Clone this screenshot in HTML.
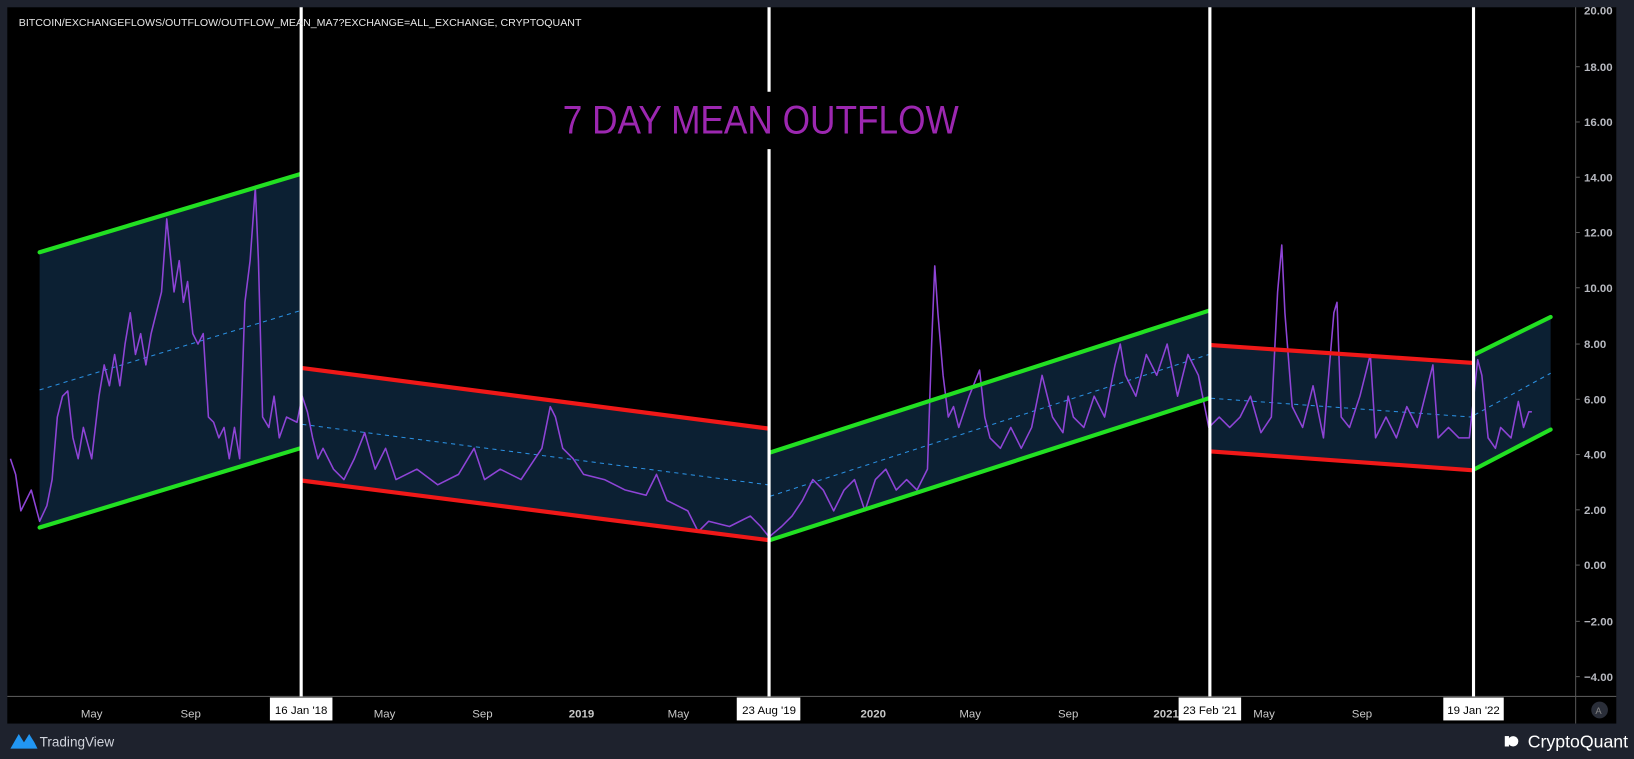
<!DOCTYPE html>
<html><head><meta charset="utf-8"><style>
html,body{margin:0;padding:0;background:#1e222d;overflow:hidden}
svg{display:block}
</style></head><body>
<svg width="1634" height="759" viewBox="0 0 1568 728" preserveAspectRatio="none" xmlns="http://www.w3.org/2000/svg" font-family="Liberation Sans, sans-serif">
<rect width="1568" height="728" fill="#1e222d"/>
<rect x="7" y="7" width="1544" height="687" fill="#000"/>
<line x1="1512" y1="7" x2="1512" y2="694" stroke="#555" stroke-width="1"/>
<line x1="7" y1="668" x2="1551" y2="668" stroke="#555" stroke-width="1"/>
<g fill="#b7b9c0" font-size="11" font-weight="bold">
<text x="1520" y="14">20.00</text>
<text x="1520" y="68">18.00</text>
<text x="1520" y="121">16.00</text>
<text x="1520" y="174">14.00</text>
<text x="1520" y="227">12.00</text>
<text x="1520" y="280">10.00</text>
<text x="1520" y="334">8.00</text>
<text x="1520" y="387">6.00</text>
<text x="1520" y="440">4.00</text>
<text x="1520" y="493">2.00</text>
<text x="1520" y="546">0.00</text>
<text x="1520" y="600">−2.00</text>
<text x="1520" y="653">−4.00</text>
</g>
<g stroke="#555"><line x1="1512" x2="1516" y1="64" y2="64"/><line x1="1512" x2="1516" y1="117" y2="117"/><line x1="1512" x2="1516" y1="170" y2="170"/><line x1="1512" x2="1516" y1="223" y2="223"/><line x1="1512" x2="1516" y1="276" y2="276"/><line x1="1512" x2="1516" y1="330" y2="330"/><line x1="1512" x2="1516" y1="383" y2="383"/><line x1="1512" x2="1516" y1="436" y2="436"/><line x1="1512" x2="1516" y1="489" y2="489"/><line x1="1512" x2="1516" y1="542" y2="542"/><line x1="1512" x2="1516" y1="596" y2="596"/><line x1="1512" x2="1516" y1="649" y2="649"/></g>
<circle cx="1535" cy="681" r="8" fill="#2a2e39"/><text x="1531" y="685" font-size="9" fill="#888">A</text>
<g fill="#c8c8c8" font-size="11" text-anchor="middle">
<text x="88" y="688">May</text><text x="183" y="688">Sep</text><text x="369" y="688">May</text><text x="463" y="688">Sep</text><text x="558" y="688" font-weight="bold">2019</text><text x="651" y="688">May</text><text x="838" y="688" font-weight="bold">2020</text><text x="931" y="688">May</text><text x="1025" y="688">Sep</text><text x="1119" y="688" font-weight="bold">2021</text><text x="1213" y="688">May</text><text x="1307" y="688">Sep</text>
</g>
<g fill="#0c2033">
<polygon points="38,242 288,167 288,430 38,506"/>
<polygon points="290,353 737,411 737,518 290,461"/>
<polygon points="739,434 1160,298 1160,382 739,518"/>
<polygon points="1162,331 1412,348 1412,451 1162,433"/>
<polygon points="1415,340 1488,304 1488,412 1415,450"/>
</g>
<g stroke="#2a8fe0" stroke-width="1" stroke-dasharray="4,4">
<line x1="38" y1="374" x2="288" y2="298"/>
<line x1="290" y1="407" x2="737" y2="465"/>
<line x1="739" y1="476" x2="1160" y2="340"/>
<line x1="1162" y1="382" x2="1412" y2="400"/>
<line x1="1415" y1="398" x2="1488" y2="358"/>
</g>
<polyline fill="none" stroke="#8e44d6" stroke-width="1.5" stroke-linejoin="round" points="10,440 15,455 20,490 30,470 38,500 45,485 50,460 55,400 60,380 65,375 70,420 75,440 80,410 88,440 95,380 100,350 105,370 110,340 115,370 120,330 125,300 130,340 135,320 140,350 145,320 150,300 155,280 160,210 163,240 167,280 172,250 176,290 180,270 185,320 190,330 195,320 200,400 205,405 210,420 215,410 220,440 225,410 230,440 235,290 240,250 245,180 248,250 252,400 258,410 263,380 268,420 275,400 285,405 290,380 295,395 300,420 305,440 310,430 320,450 330,460 340,440 350,415 360,450 370,430 380,460 400,450 420,465 440,455 455,430 465,460 480,450 500,460 520,430 528,390 533,400 540,430 550,440 560,455 580,460 600,470 620,475 630,455 640,480 660,490 670,510 680,500 700,505 720,495 730,505 738,515 750,505 760,495 770,480 780,460 790,470 800,490 810,470 820,460 830,490 840,460 850,450 860,470 870,460 880,470 890,450 894,330 897,255 900,300 905,360 910,400 915,390 920,410 930,380 940,355 945,400 950,420 960,430 970,410 980,430 990,410 1000,360 1010,400 1020,415 1025,380 1030,400 1040,410 1050,380 1060,400 1070,350 1075,330 1080,360 1090,380 1100,340 1110,360 1120,330 1130,380 1140,340 1150,360 1155,385 1160,410 1170,400 1180,410 1190,400 1200,380 1210,415 1220,400 1226,280 1230,235 1233,300 1240,390 1250,410 1260,370 1270,420 1280,300 1283,290 1287,400 1295,410 1305,380 1315,340 1320,420 1330,400 1340,420 1350,390 1360,410 1375,350 1380,420 1390,410 1400,420 1410,420 1418,345 1422,360 1428,420 1435,430 1440,410 1450,420 1457,385 1462,410 1467,395 1470,395"/>
<g stroke-width="4" stroke-linecap="round">
<line x1="38" y1="242" x2="288" y2="167" stroke="#22e022"/>
<line x1="38" y1="506" x2="288" y2="430" stroke="#22e022"/>
<line x1="290" y1="353" x2="737" y2="411" stroke="#f01818"/>
<line x1="290" y1="461" x2="737" y2="518" stroke="#f01818"/>
<line x1="739" y1="434" x2="1160" y2="298" stroke="#22e022"/>
<line x1="739" y1="518" x2="1160" y2="382" stroke="#22e022"/>
<line x1="1162" y1="331" x2="1412" y2="348" stroke="#f01818"/>
<line x1="1162" y1="433" x2="1412" y2="451" stroke="#f01818"/>
<line x1="1415" y1="340" x2="1488" y2="304" stroke="#22e022"/>
<line x1="1415" y1="450" x2="1488" y2="412" stroke="#22e022"/>
</g>
<g stroke="#fff" stroke-width="3">
<line x1="289" y1="7" x2="289" y2="668"/>
<line x1="738" y1="7" x2="738" y2="88"/>
<line x1="738" y1="143" x2="738" y2="668"/>
<line x1="1161" y1="7" x2="1161" y2="668"/>
<line x1="1414" y1="7" x2="1414" y2="668"/>
</g>
<text x="540" y="128" font-size="38" fill="#9c27b0" textLength="380" lengthAdjust="spacingAndGlyphs">7 DAY MEAN OUTFLOW</text>
<text x="18" y="25" font-size="10" fill="#e8e8e8" textLength="540" lengthAdjust="spacingAndGlyphs">BITCOIN/EXCHANGEFLOWS/OUTFLOW/OUTFLOW_MEAN_MA7?EXCHANGE=ALL_EXCHANGE, CRYPTOQUANT</text>
<g font-size="11" text-anchor="middle" fill="#000">
<rect x="259" y="669" width="60" height="22" fill="#fff"/><text x="289" y="685">16 Jan '18</text>
<rect x="707" y="669" width="61" height="22" fill="#fff"/><text x="738" y="685">23 Aug '19</text>
<rect x="1131" y="669" width="60" height="22" fill="#fff"/><text x="1161" y="685">23 Feb '21</text>
<rect x="1385" y="669" width="58" height="22" fill="#fff"/><text x="1414" y="685">19 Jan '22</text>
</g>
<path d="M10,718 L18,704 L23,712 L28,704 L33,712 L36,718 Z" fill="#2196f3"/>
<text x="38" y="716" font-size="13" fill="#d1d4dc">TradingView</text>
<circle cx="1452" cy="711" r="5" fill="#fff"/><rect x="1444" y="706" width="4" height="10" fill="#fff"/>
<text x="1466" y="717" font-size="17" fill="#fff">CryptoQuant</text>
</svg>
</body></html>
